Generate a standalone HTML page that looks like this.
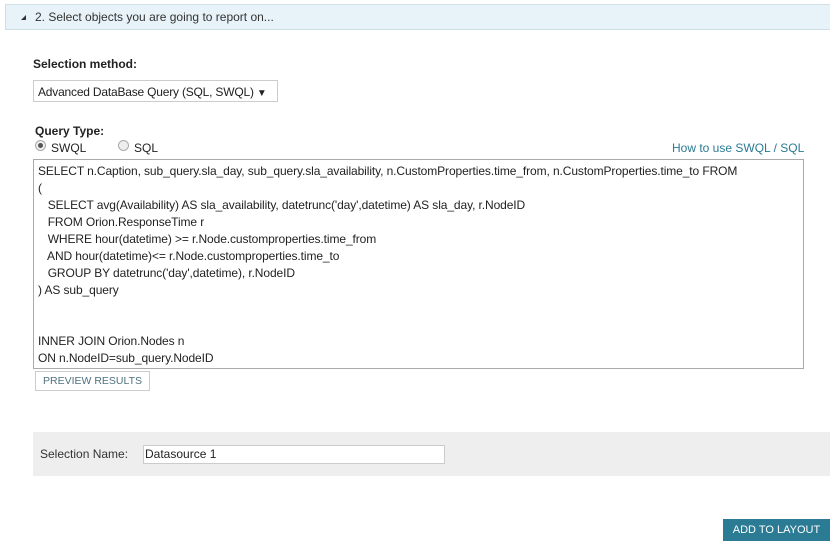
<!DOCTYPE html>
<html><head><style>
body{margin:0;width:830px;height:541px;background:#fff;font-family:"Liberation Sans",sans-serif;color:#222;position:relative;overflow:hidden}
.hdr{position:absolute;left:5px;top:4px;width:825px;height:24px;background:#e7f3f8;border:1px solid #cfdfe7;border-right:none}
.hdr span{position:absolute;left:29px;top:5px;font-size:12px;color:#333}
.tri{position:absolute;left:15px;top:10px;width:0;height:0;border-left:5px solid transparent;border-bottom:5px solid #333}
.lbl{position:absolute;font-size:12px;font-weight:bold;color:#222}
.sel{position:absolute;left:33px;top:80px;width:245px;height:22px;border:1px solid #ccc;font-size:12px;box-sizing:border-box;padding:4px 0 0 4px;white-space:nowrap;letter-spacing:-0.2px}
.radio{position:absolute;top:140px;width:11px;height:11px;border-radius:50%;border:1px solid #aaa;background:#eee;box-sizing:border-box}
.ta{position:absolute;left:33px;top:159px;width:771px;height:210px;border:1px solid #aaa;box-sizing:border-box;font-size:12px;line-height:17px;padding:3px 4px;white-space:pre;color:#222;letter-spacing:-0.1px}
.btn{position:absolute;left:35px;top:371px;width:115px;height:20px;border:1px solid #ccc;box-sizing:border-box;font-size:10.5px;color:#4d7180;text-align:center;line-height:18px}
.band{position:absolute;left:33px;top:432px;width:797px;height:44px;background:#eee}
.inp{position:absolute;left:143px;top:445px;width:302px;height:19px;background:#fff;border:1px solid #ccc;box-sizing:border-box;font-size:12px;padding:1px 0 0 1px}
.add{position:absolute;left:723px;top:519px;width:107px;height:22px;background:#2a7b93;color:#fff;font-size:11px;text-align:center;line-height:23px}
</style></head><body>
<div class="hdr"><div class="tri"></div><span>2. Select objects you are going to report on...</span></div>
<div class="lbl" style="left:33px;top:57px">Selection method:</div>
<div class="sel">Advanced DataBase Query (SQL, SWQL) <span style="font-size:10px">&#9660;</span></div>
<div class="lbl" style="left:35px;top:124px">Query Type:</div>
<div class="radio" style="left:35px"><div style="width:5px;height:5px;border-radius:50%;background:#555;margin:2px"></div></div>
<div style="position:absolute;left:51px;top:141px;font-size:12px">SWQL</div>
<div class="radio" style="left:118px"></div>
<div style="position:absolute;left:134px;top:141px;font-size:12px">SQL</div>
<div style="position:absolute;left:672px;top:141px;font-size:12px;color:#2a7b93">How to use SWQL / SQL</div>
<div class="ta">SELECT n.Caption, sub_query.sla_day, sub_query.sla_availability, n.CustomProperties.time_from, n.CustomProperties.time_to FROM
(
   SELECT avg(Availability) AS sla_availability, datetrunc('day',datetime) AS sla_day, r.NodeID
   FROM Orion.ResponseTime r
   WHERE hour(datetime) &gt;= r.Node.customproperties.time_from
   AND hour(datetime)&lt;= r.Node.customproperties.time_to
   GROUP BY datetrunc('day',datetime), r.NodeID
) AS sub_query


INNER JOIN Orion.Nodes n
ON n.NodeID=sub_query.NodeID</div>
<div class="btn">PREVIEW RESULTS</div>
<div class="band"></div>
<div style="position:absolute;left:40px;top:447px;font-size:12px;color:#333">Selection Name:</div>
<div class="inp">Datasource 1</div>
<div class="add">ADD TO LAYOUT</div>
</body></html>
